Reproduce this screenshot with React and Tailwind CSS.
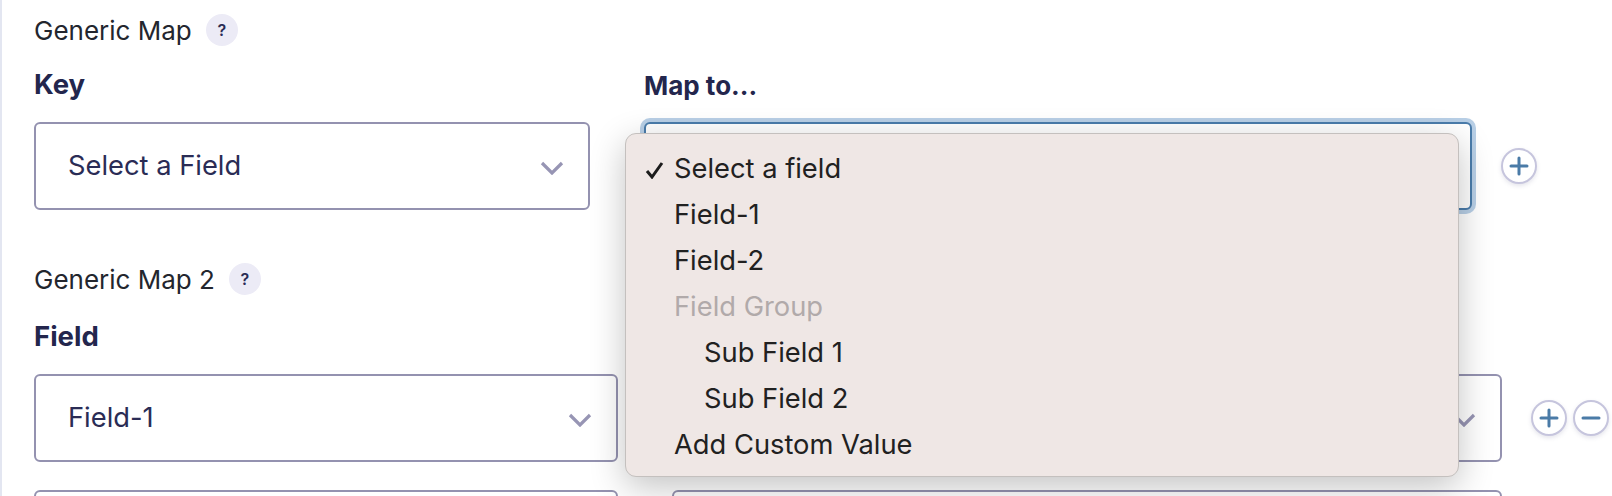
import React from "react";

const MENU_ITEMS = [
  { label: "Select a field", checked: true },
  { label: "Field-1" },
  { label: "Field-2" },
  { label: "Field Group", disabled: true },
  { label: "Sub Field 1", nested: true },
  { label: "Sub Field 2", nested: true },
  { label: "Add Custom Value" },
];

function Chevron() {
  return (
    <svg className="w-[24px] h-[14px] shrink-0 mt-[4px]" viewBox="0 0 24 14" fill="none" stroke="#9795b4" strokeWidth="3.2">
      <path d="M2 2l10 10L22 2" />
    </svg>
  );
}

function Select({ label, className = "" }) {
  return (
    <div className={`h-[88px] shrink-0 bg-white border-2 border-[#9492b0] rounded-[6px] flex items-center justify-between pl-[32px] pr-[24px] text-[27.3px] text-[#2a2c55] ${className}`}>
      <span>{label}</span>
      <Chevron />
    </div>
  );
}

function RoundButton({ minus }) {
  return (
    <button className="w-[36px] h-[36px] shrink-0 rounded-full bg-white border-2 border-[#c6c5dd] shadow-[0_2px_4px_rgba(80,80,130,0.15)] flex items-center justify-center">
      <svg className="w-[20px] h-[20px]" viewBox="0 0 20 20" fill="none" stroke="#4a7ba7" strokeWidth="3" strokeLinecap="round">
        <path d="M2 10h16" />
        {!minus && <path d="M10 2v16" />}
      </svg>
    </button>
  );
}

function FieldLabel({ text }) {
  return (
    <div className="flex items-center gap-[14px] h-[32px] text-[26px] text-[#23262e]">
      <span>{text}</span>
      <span className="w-[32px] h-[32px] rounded-full bg-[#ecebf6] flex items-center justify-center text-[16px] font-semibold text-[#2a2c55]">?</span>
    </div>
  );
}

export default function App() {
  return (
    <div className="relative w-[1612px] h-[496px] overflow-hidden bg-white border-l-2 border-[#e3e6f1] pl-[32px] pt-[14px] font-['Inter',sans-serif]">
      {/* Generic Map */}
      <FieldLabel text="Generic Map" />
      <div className="flex items-center gap-[54px] h-[36px] mt-[21px] text-[27.5px] font-bold text-[#23264d]">
        <span className="w-[556px]">Key</span>
        <span className="text-[26px]">Map to...</span>
      </div>
      <div className="flex items-center mt-[19px]">
        <Select label="Select a Field" className="w-[556px]" />
        <div className="w-[828px] h-[88px] ml-[54px] bg-white border-2 border-[#4a7cab] rounded-[6px] ring-4 ring-[#b8cfe6]" />
        <div className="ml-[29px]">
          <RoundButton />
        </div>
      </div>

      {/* Generic Map 2 */}
      <div className="mt-[53px]">
        <FieldLabel text="Generic Map 2" />
      </div>
      <div className="flex items-center h-[36px] mt-[24px] text-[27.5px] font-bold text-[#23264d]">Field</div>
      <div className="flex items-center mt-[19px]">
        <Select label="Field-1" className="w-[584px]" />
        <Select label="" className="w-[830px] ml-[54px]" />
        <div className="flex gap-[6px] ml-[29px]">
          <RoundButton />
          <RoundButton minus />
        </div>
      </div>
      <div className="flex items-center mt-[28px]">
        <Select label="" className="w-[584px]" />
        <Select label="" className="w-[830px] ml-[54px]" />
      </div>

      {/* Open dropdown */}
      <div className="absolute left-[623px] top-[133px] w-[834px] h-[344px] pt-[12px] rounded-[11px] bg-[#efe7e5] border border-[#c4c0be] shadow-[0_10px_35px_rgba(0,0,0,0.24)] text-[27.3px]">
        {MENU_ITEMS.map((item) => (
          <div
            key={item.label}
            className={`relative h-[46px] flex items-center ${item.nested ? "pl-[78px]" : "pl-[48px]"} ${item.disabled ? "text-[#b1aaaa]" : "text-[#212121]"}`}
          >
            {item.checked && (
              <svg className="absolute left-[19px] top-[15px] w-[19px] h-[18px]" viewBox="0 0 19 18" fill="none" stroke="#1c1c1c" strokeWidth="3">
                <path d="M2 10l5 6L17 2" />
              </svg>
            )}
            {item.label}
          </div>
        ))}
      </div>
    </div>
  );
}
